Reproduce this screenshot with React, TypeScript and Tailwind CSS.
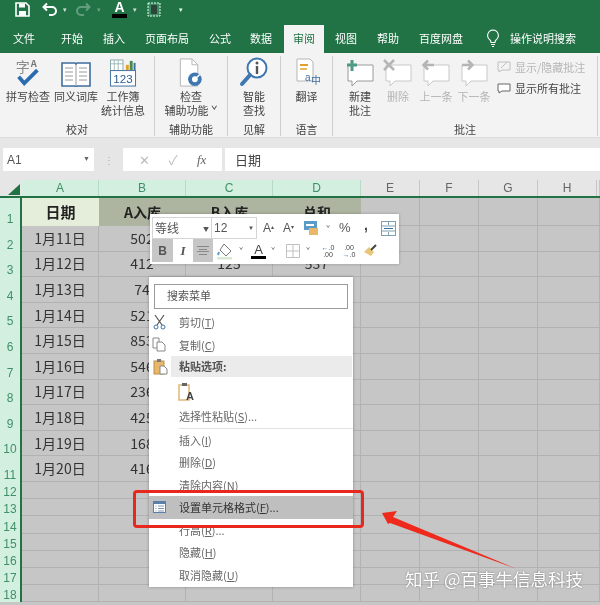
import React from "react";

const tabs: [string, number][] = [["文件", 48], ["开始", 48], ["插入", 36], ["页面布局", 70], ["公式", 36], ["数据", 46]];
const tabsRight: [string, number][] = [["视图", 44], ["帮助", 40], ["百度网盘", 66]];

const colW = [77, 87, 87, 88, 59, 59, 59, 59, 3];
const colL = ["A", "B", "C", "D", "E", "F", "G", "H", ""];
const rows: [string, string, string, string][] = [
  ["1月11日", "502", "", ""],
  ["1月12日", "412", "125", "537"],
  ["1月13日", "74", "", ""],
  ["1月14日", "521", "", ""],
  ["1月15日", "853", "", ""],
  ["1月16日", "546", "", ""],
  ["1月17日", "236", "", ""],
  ["1月18日", "425", "", ""],
  ["1月19日", "168", "", ""],
  ["1月20日", "416", "", ""],
];

function RibbonBtn({ w, icon, lines, gray }: { w: number; icon: React.ReactNode; lines: string[]; gray?: boolean }) {
  return (
    <div className={`flex flex-col items-center shrink-0 ${gray ? "text-[#b5b5b5]" : "text-[#444]"}`} style={{ width: w }}>
      <div className="h-[31px] flex items-end justify-center">{icon}</div>
      <div className="text-[11px] leading-[14px] mt-[2px] text-center whitespace-nowrap">
        {lines.map((l) => (
          <div key={l}>{l}</div>
        ))}
      </div>
    </div>
  );
}

function Group({ w, label, children, pad }: { w: number; label: string; children: React.ReactNode; pad?: boolean }) {
  return (
    <div className="flex flex-col shrink-0 border-r border-[#cfcfcf] h-[80px]" style={{ width: w }}>
      <div className={`flex flex-1 ${pad ? "pl-[8px]" : ""}`}>{children}</div>
      <div className="text-[11px] leading-[14px] text-center text-[#444]">{label}</div>
    </div>
  );
}

const Bubble = ({ children, c = "#9a9a9a" }: { children?: React.ReactNode; c?: string }) => (
  <svg width="30" height="28" viewBox="0 0 30 28">
    <path d="M3 6h25v16H12l-5 5v-5H3z" fill="#fff" stroke={c} strokeWidth="1" />
    {children}
  </svg>
);

function MenuItem({ t, u, rest = "", icon, active }: { t: string; u: string; rest?: string; icon?: React.ReactNode; active?: boolean }) {
  return (
    <div className={`h-[22.5px] flex items-center text-[11px] shrink-0 ${active ? "bg-[#bfbfbf] text-[#333]" : "text-[#666]"}`}>
      <div className="w-[20px] mr-[10px] flex justify-center shrink-0">{icon}</div>
      <span className="whitespace-nowrap">
        {t}(<span className="underline">{u}</span>){rest}
      </span>
    </div>
  );
}

export default function App() {
  return (
    <div className="relative w-[600px] h-[605px] overflow-hidden bg-[#c6c6c6] font-['Noto_Sans_CJK_SC','Noto_Sans',sans-serif] blur-[0.5px]">
      {/* Quick access */}
      <div className="h-[25px] bg-[#217346] flex items-center pl-[15px] pb-[7px] text-white">
        <svg width="15" height="15" viewBox="0 0 15 15" className="mr-[12px]">
          <path d="M1 1h10l3 3v10H1z" fill="none" stroke="#fff" strokeWidth="1.6" />
          <rect x="4" y="1.5" width="6" height="4" fill="#fff" />
          <rect x="4" y="9" width="7" height="5" fill="#fff" />
        </svg>
        <svg width="16" height="14" viewBox="0 0 16 14" className="mr-[5px]">
          <path d="M2 5h8a4 4 0 0 1 0 8H7M5 1.5 1.5 5 5 8.5" fill="none" stroke="#fff" strokeWidth="2" />
        </svg>
        <span className="text-[7px] mr-[8px] text-[#cfe0d6]">▾</span>
        <svg width="16" height="14" viewBox="0 0 16 14" className="mr-[6px] opacity-30">
          <path d="M14 5H6a4 4 0 0 0 0 8h3M11 1.5 14.5 5 11 8.5" fill="none" stroke="#fff" strokeWidth="2" />
        </svg>
        <span className="text-[7px] mr-[11px] text-[#6fa386]">▾</span>
        <div className="flex flex-col items-center w-[15px] mr-[6px]">
          <span className="text-[14px] leading-[14px] font-bold font-['Liberation_Sans',sans-serif]">A</span>
          <span className="w-[15px] h-[4px] bg-black" />
        </div>
        <span className="text-[7px] mr-[10px] text-[#cfe0d6]">▾</span>
        <svg width="14" height="15" viewBox="0 0 14 15" className="mr-[18px]">
          <rect x="1" y="1" width="12" height="13" fill="#3d8a62" stroke="#dfe" strokeWidth="1" strokeDasharray="2 1" />
          <rect x="4" y="3" width="6" height="9" fill="#222" opacity=".65" />
        </svg>
        <span className="text-[7px] text-[#dfe]">▾</span>
      </div>

      {/* Tabs */}
      <div className="h-[28px] bg-[#217346] flex text-[11px] text-white">
        {tabs.map(([t, w]) => (
          <div key={t} className="flex items-center justify-center shrink-0 pb-[2px]" style={{ width: w }}>
            {t}
          </div>
        ))}
        <div className="w-[40px] shrink-0 bg-[#f3f3f3] text-[#217346] flex items-center justify-center pb-[2px]">审阅</div>
        {tabsRight.map(([t, w]) => (
          <div key={t} className="flex items-center justify-center shrink-0 pb-[2px]" style={{ width: w }}>
            {t}
          </div>
        ))}
        <div className="flex items-center ml-[12px] pb-[2px]">
          <svg width="14" height="18" viewBox="0 0 14 18" className="mr-[10px]">
            <path d="M7 1a5.5 5.5 0 0 0-3 10c.7.6 1 1.3 1 2.5h4c0-1.2.3-1.9 1-2.5A5.5 5.5 0 0 0 7 1zM5 15.5h4M6 17.5h2" fill="none" stroke="#fff" strokeWidth="1.1" />
          </svg>
          <span>操作说明搜索</span>
        </div>
      </div>

      {/* Ribbon */}
      <div className="h-[85px] bg-[#f3f3f3] flex pt-[3px] border-b border-[#dcdcdc]">
        <Group w={155} label="校对">
          <RibbonBtn
            w={56}
            lines={["拼写检查"]}
            icon={
              <svg width="28" height="30" viewBox="0 0 28 32">
                <text x="1" y="16" fontSize="15" fill="#8a8a8a">字</text>
                <text x="17" y="11" fontSize="10" fontWeight="bold" fill="#777">A</text>
                <path d="M4 21l6 7L24 14" fill="none" stroke="#2b6cb0" strokeWidth="4" />
              </svg>
            }
          />
          <RibbonBtn
            w={40}
            lines={["同义词库"]}
            icon={
              <svg width="30" height="27" viewBox="0 0 30 27">
                <path d="M1 3h13l1 1 1-1h13v23H16l-1 1-1-1H1z" fill="#fff" stroke="#3f6f9f" strokeWidth="1.6" />
                <path d="M15 4v22M4 8h8M4 12h8M4 16h8M4 20h8M18 8h8M18 12h8M18 16h8M18 20h8" stroke="#9a9a9a" strokeWidth="1" />
              </svg>
            }
          />
          <RibbonBtn
            w={54}
            lines={["工作簿", "统计信息"]}
            icon={
              <svg width="28" height="28" viewBox="0 0 28 29">
                <rect x="1" y="1" width="13" height="11" fill="#fff" stroke="#8aa" />
                <path d="M1 5h13M5 1v11M9 1v11" stroke="#8aa" strokeWidth=".8" />
                <rect x="17" y="6" width="3" height="6" fill="#e0a030" />
                <rect x="21" y="2" width="3" height="10" fill="#4a8a4a" />
                <rect x="25" y="4" width="2" height="8" fill="#3f6f9f" />
                <rect x="1" y="12" width="26" height="16" fill="#fff" stroke="#3f6f9f" />
                <text x="14" y="25" textAnchor="middle" fontSize="12" fontFamily="Liberation Sans" fill="#2b5f8f">123</text>
              </svg>
            }
          />
          <div className="flex-1" />
        </Group>
        <Group w={73} label="辅助功能">
          <RibbonBtn
            w={72}
            lines={["检查", "辅助功能 ˇ"]}
            icon={
              <svg width="24" height="29" viewBox="0 0 24 30">
                <path d="M1 1h12l6 6v22H1z" fill="#fff" stroke="#b5b5b5" />
                <path d="M13 1v6h6" fill="none" stroke="#b5b5b5" />
                <circle cx="16" cy="22" r="7" fill="#3f78b0" />
                <circle cx="16" cy="22" r="3" fill="#fff" />
                <path d="M16 22l5-5" stroke="#fff" strokeWidth="1.5" />
              </svg>
            }
          />
        </Group>
        <Group w={53} label="见解">
          <RibbonBtn
            w={52}
            lines={["智能", "查找"]}
            icon={
              <svg width="30" height="30" viewBox="0 0 28 30">
                <circle cx="17" cy="11" r="9.5" fill="#fff" stroke="#3f78b0" strokeWidth="2" />
                <path d="M10 18 2 27" stroke="#3f78b0" strokeWidth="4" strokeLinecap="round" />
                <circle cx="17" cy="6" r="1.5" fill="#555" />
                <path d="M17 9v8" stroke="#555" strokeWidth="2.4" />
              </svg>
            }
          />
        </Group>
        <Group w={52} label="语言">
          <RibbonBtn
            w={51}
            lines={["翻译"]}
            icon={
              <svg width="30" height="30" viewBox="0 0 30 30">
                <path d="M5 2h13l3 3v19H5z" fill="#fff" stroke="#b5b5b5" />
                <path d="M8 8h8" stroke="#e0a030" strokeWidth="2" />
                <path d="M8 12h7" stroke="#e0a030" strokeWidth="1.5" />
                <text x="13" y="24" fontSize="10" fill="#3f6f9f" fontFamily="Liberation Sans">a</text>
                <text x="19" y="27" fontSize="10" fill="#3f6f9f">中</text>
              </svg>
            }
          />
        </Group>
        <Group w={265} label="批注" pad>
          <RibbonBtn
            w={38}
            lines={["新建", "批注"]}
            icon={
              <Bubble>
                <path d="M2 6h10M7 1v11" stroke="#4f9a85" strokeWidth="3" />
              </Bubble>
            }
          />
          <RibbonBtn
            w={38}
            gray
            lines={["删除"]}
            icon={
              <Bubble c="#c8c8c8">
                <path d="M1 1l10 10M11 1 1 11" stroke="#b5b5b5" strokeWidth="2.5" />
              </Bubble>
            }
          />
          <RibbonBtn
            w={38}
            gray
            lines={["上一条"]}
            icon={
              <Bubble c="#c8c8c8">
                <path d="M13 6H3M7 1.5 2.5 6 7 10.5" fill="none" stroke="#b5b5b5" strokeWidth="2.5" />
              </Bubble>
            }
          />
          <RibbonBtn
            w={38}
            gray
            lines={["下一条"]}
            icon={
              <Bubble c="#c8c8c8">
                <path d="M3 6h10M9 1.5 13.5 6 9 10.5" fill="none" stroke="#b5b5b5" strokeWidth="2.5" />
              </Bubble>
            }
          />
          <div className="flex flex-col pl-[4px] text-[11px] leading-[14px] whitespace-nowrap">
            <div className="flex items-center gap-[4px] h-[21px] text-[#b5b5b5]">
              <svg width="14" height="12" viewBox="0 0 14 12">
                <path d="M1 1h12v8H5l-3 2V9H1zM4 7l6-6" fill="none" stroke="#c0c0c0" />
              </svg>
              显示/隐藏批注
            </div>
            <div className="flex items-center gap-[4px] h-[21px] text-[#444]">
              <svg width="14" height="12" viewBox="0 0 14 12">
                <path d="M1 2h12v7H5l-3 2V9H1z" fill="#fff" stroke="#666" />
              </svg>
              显示所有批注
            </div>
          </div>
        </Group>
      </div>

      {/* Formula bar */}
      <div className="h-[42px] bg-[#e6e6e6] flex items-start pt-[10px] pl-[3px] text-[#555]">
        <div className="w-[91px] h-[23px] bg-white flex items-center justify-between px-[4px] text-[12px] font-['Liberation_Sans',sans-serif]">
          <span>A1</span>
          <span className="text-[7px] text-[#666]">▼</span>
        </div>
        <div className="w-[29px] h-[23px] flex items-center justify-center text-[#aaa] text-[10px]">⋮</div>
        <div className="w-[99px] h-[23px] bg-white flex items-center justify-around px-[6px] text-[#bbb] text-[13px]">
          <span>✕</span>
          <span>✓</span>
          <span className="font-['Liberation_Serif',serif] italic text-[#666]">fx</span>
        </div>
        <div className="ml-[3px] flex-1 h-[23px] bg-white flex items-center pl-[10px] text-[13px] text-[#444]">日期</div>
      </div>

      {/* Sheet */}
      <div className="flex flex-col">
        <div className="flex h-[16px]">
          <div className="w-[22px] shrink-0 bg-[#e6e6e6] flex items-end justify-end pr-[2px] pb-[1px]">
            <svg width="12" height="11" viewBox="0 0 12 11"><path d="M12 0v11H0z" fill="#217346" /></svg>
          </div>
          {colW.map((w, i) => (
            <div
              key={i}
              className={`shrink-0 flex items-center justify-center text-[12px] font-['Liberation_Sans',sans-serif] border-r ${i < 4 ? "bg-[#d3efe0] text-[#3f9068] border-[#b8dac9]" : "bg-[#e6e6e6] text-[#666] border-[#c6c6c6]"}`}
              style={{ width: w }}
            >
              {colL[i]}
            </div>
          ))}
        </div>
        <div className="flex h-[30px] border-t-2 border-[#217346]">
          <div className="w-[22px] shrink-0 bg-[#d3efe0] border-r-2 border-[#217346] flex items-end justify-center text-[12px] leading-[13px] text-[#3f9068] font-['Liberation_Sans',sans-serif]">1</div>
          <div className="w-[77px] shrink-0 bg-[#e4eeda] flex items-center justify-center text-[15px] font-bold text-[#222]">日期</div>
          <div className="w-[87px] shrink-0 bg-[#adb4a0] flex items-center justify-center text-[14px] font-bold text-[#222]">A入库</div>
          <div className="w-[87px] shrink-0 bg-[#adb4a0] flex items-center justify-center text-[14px] font-bold text-[#222]">B入库</div>
          <div className="w-[88px] shrink-0 bg-[#adb4a0] flex items-center justify-center text-[14px] font-bold text-[#222]">总和</div>
          <div className="flex-1 flex">
            {[59, 59, 59, 62].map((w, i) => (
              <div key={i} className="border-r border-b border-[#b2b2b2] shrink-0" style={{ width: w }} />
            ))}
          </div>
        </div>
        {rows.map((r, i) => (
          <div key={i} className="flex h-[25.6px]">
            <div className="w-[22px] shrink-0 bg-[#d3efe0] border-r-2 border-[#217346] flex items-end justify-center text-[12px] leading-[13px] text-[#3f9068] font-['Liberation_Sans',sans-serif]">{i + 2}</div>
            <div className="w-[77px] shrink-0 border-r border-b border-[#b2b2b2] flex items-center justify-center text-[14px] text-[#333]">{r[0]}</div>
            <div className="w-[87px] shrink-0 border-r border-b border-[#b2b2b2] flex items-center justify-center text-[14px] text-[#333]">{r[1]}</div>
            <div className="w-[87px] shrink-0 border-r border-b border-[#b2b2b2] flex items-center justify-center text-[14px] text-[#333]">{r[2]}</div>
            <div className="w-[88px] shrink-0 border-r border-b border-[#b2b2b2] flex items-center justify-center text-[14px] text-[#333]">{r[3]}</div>
            {[59, 59, 59, 62].map((w, j) => (
              <div key={j} className="border-r border-b border-[#b2b2b2] shrink-0" style={{ width: w }} />
            ))}
          </div>
        ))}
        {[12, 13, 14, 15, 16, 17, 18].map((n) => (
          <div key={n} className="flex h-[17.2px]">
            <div className="w-[22px] shrink-0 bg-[#d3efe0] border-r-2 border-[#217346] flex items-end justify-center text-[12px] leading-[14px] text-[#3f9068] font-['Liberation_Sans',sans-serif]">{n}</div>
            {[77, 87, 87, 88, 59, 59, 59, 62].map((w, j) => (
              <div key={j} className="border-r border-b border-[#b2b2b2] shrink-0" style={{ width: w }} />
            ))}
          </div>
        ))}
      </div>

      {/* Mini toolbar */}
      <div className="absolute left-[150px] top-[214px] w-[249px] h-[50px] bg-white shadow-[0_0_3px_rgba(0,0,0,0.25)] px-[2px] pt-[3px] text-[#555]">
        <div className="flex items-center h-[22px]">
          <div className="w-[60px] h-[22px] border border-[#d5d5d5] flex items-center justify-between px-[2px] text-[12px]">
            等线<span className="text-[6px]">▼</span>
          </div>
          <div className="w-[45px] h-[22px] border border-l-0 border-[#d5d5d5] flex items-center justify-between px-[2px] text-[12px] font-['Liberation_Sans',sans-serif]">
            12<span className="text-[6px]">▼</span>
          </div>
          <span className="ml-[6px] w-[20px] text-[12px] font-['Liberation_Sans',sans-serif]">A<sup className="text-[6px]">▴</sup></span>
          <span className="w-[20px] text-[12px] font-['Liberation_Sans',sans-serif]">A<sup className="text-[6px]">▾</sup></span>
          <svg width="16" height="16" viewBox="0 0 16 16" className="mr-[7px]">
            <rect x="1" y="1" width="13" height="9" fill="#5b9bc8" />
            <rect x="3" y="4" width="8" height="2" fill="#fff" />
            <rect x="6" y="8" width="9" height="7" fill="#e8b868" />
          </svg>
          <span className="text-[7px] w-[13px]">ˇ</span>
          <span className="text-[13px] w-[21px] font-['Liberation_Sans',sans-serif]">%</span>
          <span className="text-[14px] font-bold w-[18px] pl-[4px] -mt-[6px] font-['Liberation_Sans',sans-serif] text-[#444]">,</span>
          <svg width="15" height="15" viewBox="0 0 15 15" className="ml-[3px]">
            <rect x=".5" y=".5" width="14" height="14" fill="#fff" stroke="#7f9fb0" />
            <path d="M.5 5h14M.5 10h14M7.5 1v3M7.5 11v3" stroke="#7f9fb0" />
            <path d="M3 7.5h9" stroke="#3f6f9f" />
          </svg>
        </div>
        <div className="flex items-center h-[23px]">
          <div className="w-[21px] h-[23px] bg-[#c6c6c6] flex items-center justify-center text-[12px] font-bold font-['Liberation_Sans',sans-serif]">B</div>
          <div className="w-[20px] h-[23px] flex items-center justify-center text-[13px] italic font-bold font-['Liberation_Serif',serif]">I</div>
          <div className="w-[20px] h-[23px] bg-[#c6c6c6] flex items-center justify-center">
            <svg width="12" height="9" viewBox="0 0 12 9"><path d="M0 .5h12M2 3.5h8M0 5.5h12M2 8.5h8" stroke="#888" /></svg>
          </div>
          <svg width="18" height="18" viewBox="0 0 18 18" className="ml-[3px] mr-[5px]">
            <path d="M8 2l7 7-5 5-6-6z" fill="#fff" stroke="#777" />
            <path d="M3 10l-1 3" stroke="#5b9bc8" strokeWidth="2" />
            <rect x="1" y="15" width="15" height="2.5" fill="#d9ead3" />
          </svg>
          <span className="text-[7px] w-[12px]">ˇ</span>
          <div className="flex flex-col items-center w-[15px] mr-[5px]">
            <span className="text-[13px] leading-[13px] font-['Liberation_Sans',sans-serif] text-[#444]">A</span>
            <span className="w-[15px] h-[3px] bg-black" />
          </div>
          <span className="text-[7px] w-[15px]">ˇ</span>
          <svg width="14" height="14" viewBox="0 0 14 14" className="mr-[6px]">
            <path d="M.5.5h13v13H.5zM7 .5v13M.5 7h13" fill="none" stroke="#c0c0c0" />
          </svg>
          <span className="text-[7px] w-[13px]">ˇ</span>
          <span className="text-[7px] leading-[7px] w-[18px] text-center font-['Liberation_Sans',sans-serif] text-[#444]">
            <span className="text-[#2b6cb0]">←</span>.0<br />.00
          </span>
          <span className="ml-[3px] text-[7px] leading-[7px] w-[18px] text-center font-['Liberation_Sans',sans-serif] text-[#444]">
            .00<br /><span className="text-[#2b6cb0]">→</span>.0
          </span>
          <svg width="15" height="15" viewBox="0 0 15 15" className="ml-[5px]">
            <path d="M1 9l5-5 5 5-3 4z" fill="#e8c878" />
            <path d="M8 7l5-5" stroke="#444" strokeWidth="2" />
          </svg>
        </div>
      </div>

      {/* Context menu */}
      <div className="absolute left-[149px] top-[277px] w-[204px] h-[310px] bg-white shadow-[0_0_3px_rgba(0,0,0,0.3)] flex flex-col">
        <div className="mx-[5px] mt-[7px] h-[25px] border border-[#9a9a9a] flex items-center pl-[12px] pb-[2px] text-[11px] text-[#555]">搜索菜单</div>
        <div className="h-[2px] shrink-0" />
        <MenuItem
          t="剪切"
          u="T"
          icon={
            <svg width="13" height="16" viewBox="0 0 13 16">
              <path d="M2 1l7 10M11 1 4 11" stroke="#555" strokeWidth="1.2" />
              <circle cx="3" cy="13" r="2" fill="none" stroke="#3f78b0" />
              <circle cx="10" cy="13" r="2" fill="none" stroke="#3f78b0" />
            </svg>
          }
        />
        <MenuItem
          t="复制"
          u="C"
          icon={
            <svg width="14" height="15" viewBox="0 0 14 15">
              <path d="M1 1h6v10H1z" fill="#fff" stroke="#888" />
              <path d="M5 5h5l3 3v6H5z" fill="#fff" stroke="#888" />
            </svg>
          }
        />
        <div className="h-[21px] flex items-center shrink-0 text-[11px] font-bold text-[#555]">
          <div className="w-[22px] flex justify-center shrink-0">
            <svg width="15" height="16" viewBox="0 0 15 16">
              <rect x="1" y="2" width="10" height="13" fill="#e8b868" stroke="#b89048" />
              <rect x="4" y="0" width="4" height="3" fill="#777" />
              <path d="M7 7h4l3 3v5H7z" fill="#fff" stroke="#888" />
            </svg>
          </div>
          <div className="flex-1 h-full bg-[#ebebeb] flex items-center pl-[8px] mr-[1px]">粘贴选项:</div>
        </div>
        <div className="h-[28px] flex items-center pl-[29px] shrink-0">
          <svg width="17" height="19" viewBox="0 0 17 19">
            <path d="M1 3h10v15H1z" fill="#fff" stroke="#e0b878" strokeWidth="1.5" />
            <rect x="4" y="1" width="5" height="3" fill="#666" />
            <text x="8" y="18" fontSize="11" fontWeight="bold" fontFamily="Liberation Sans" fill="#444">A</text>
          </svg>
        </div>
        <MenuItem t="选择性粘贴" u="S" rest="..." />
        <div className="ml-[30px] h-px bg-[#e2e2e2] shrink-0" />
        <MenuItem t="插入" u="I" />
        <MenuItem t="删除" u="D" />
        <MenuItem t="清除内容" u="N" />
        <MenuItem
          t="设置单元格格式"
          u="F"
          rest="..."
          active
          icon={
            <svg width="13" height="12" viewBox="0 0 13 12">
              <rect x=".5" y=".5" width="12" height="11" fill="#fff" stroke="#5a7fa8" />
              <rect x=".5" y=".5" width="12" height="2.5" fill="#5a7fa8" />
              <path d="M2.5 5h1M5 5h6M2.5 7.5h1M5 7.5h6M2.5 10h1M5 10h6" stroke="#5a7fa8" strokeWidth=".8" />
            </svg>
          }
        />
        <MenuItem t="行高" u="R" rest="..." />
        <MenuItem t="隐藏" u="H" />
        <MenuItem t="取消隐藏" u="U" />
      </div>

      {/* Red annotation */}
      <div className="absolute left-[133px] top-[490px] w-[231px] h-[38px] border-[3px] border-[#e8281c] rounded-[4px]" />
      <svg width="150" height="70" viewBox="0 0 150 70" className="absolute left-[378px] top-[508px]">
        <path d="M4 5 19 3 15 9 139 61 12 15 10 16z" fill="#ef2a1c" />
      </svg>

      {/* Watermark */}
      <div className="absolute left-[405px] top-[566px] text-[17.5px] leading-[26px] text-white whitespace-nowrap [text-shadow:0_0_2px_rgba(90,90,90,0.8)]">
        知乎 @百事牛信息科技
      </div>
    </div>
  );
}
